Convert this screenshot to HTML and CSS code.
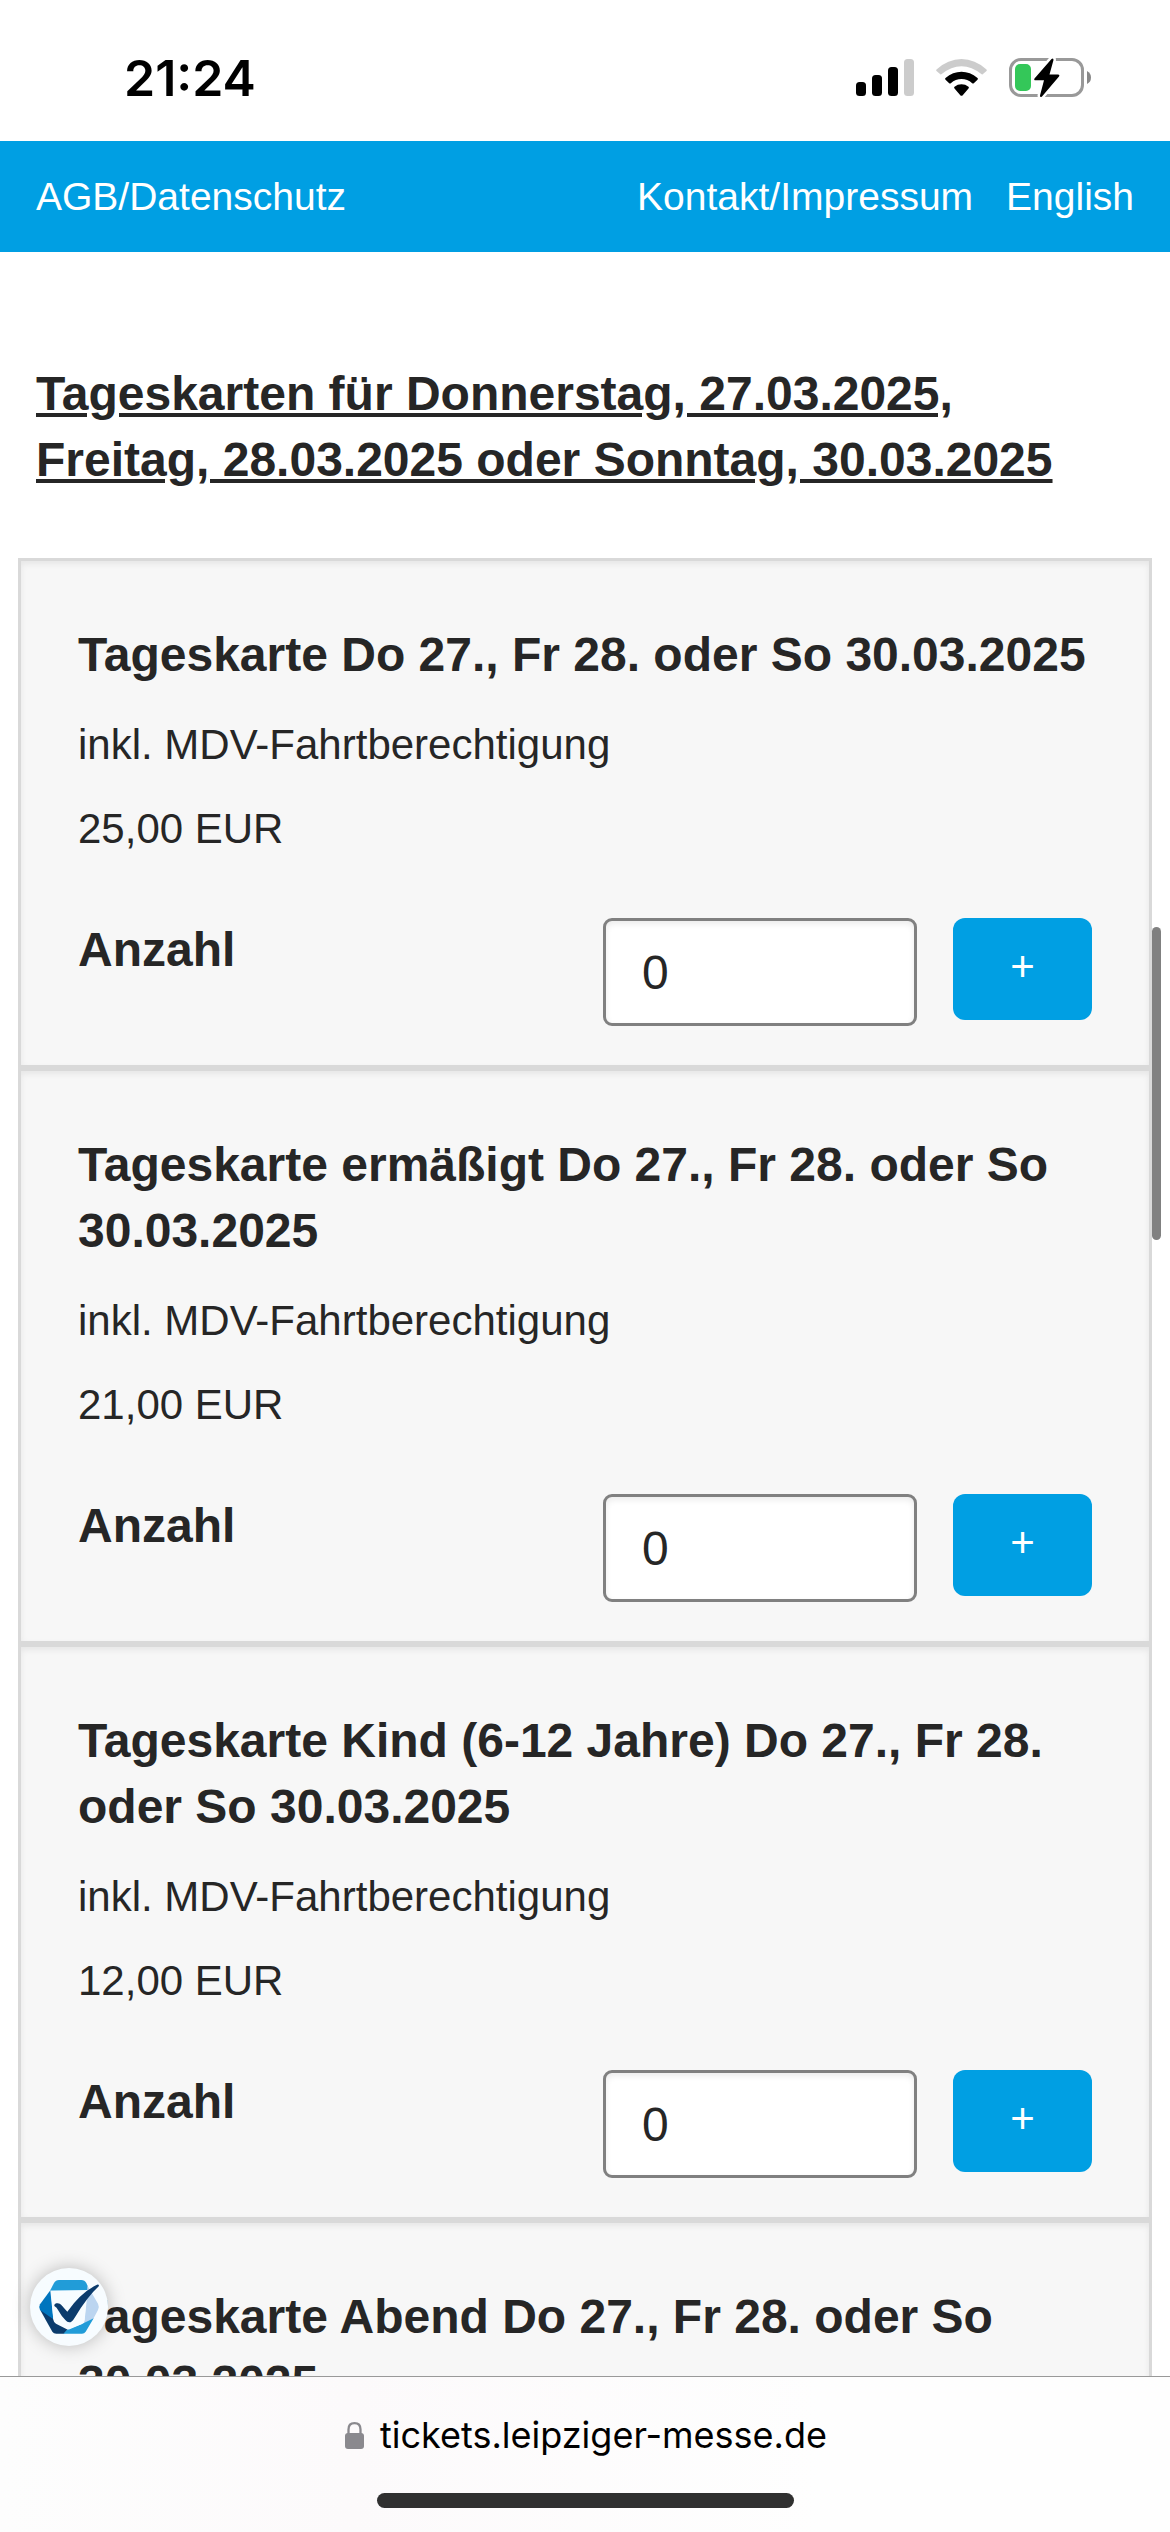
FILE: index.html
```html
<!DOCTYPE html>
<html lang="de">
<head>
    <meta charset="UTF-8">
    <meta name="viewport" content="width=device-width, initial-scale=1.0">
    <title>Tickets - Leipziger Messe</title>
    <link rel="stylesheet" href="styles.css">
</head>
<body>

<div class="statusbar">
  <span class="time">21:24</span>
  <svg class="status-icons" width="236" height="42" viewBox="0 0 236 42">
    <!-- Signal -->
    <rect x="0" y="25" width="10" height="14" rx="3.5"/>
    <rect x="16" y="18" width="10" height="21" rx="3.5"/>
    <rect x="32" y="10" width="10" height="29" rx="3.5"/>
    <rect x="48" y="2" width="10" height="37" rx="3.5" fill="#ccc"/>
    <!-- WLAN -->
    <path d="M80.500 12.500 Q79.700 13.200 80.500 14 L84.300 17.200 Q85 17.700 85.700 17.100 Q95.200 9.200 105.500 9.200 Q115.800 9.200 125.300 17.100 Q126 17.700 126.700 17.200 L130.500 14 Q131.200 13.200 130.500 12.500 Q119 2 105.500 2 Q92 2 80.500 12.500Z" fill="#ccc"/>
    <path d="M89.500 21 Q88.600 21.900 89.500 22.700 L93.200 26.200 Q94 26.900 94.800 26.200 Q99.600 22 105.500 22 Q111.400 22 116.200 26.200 Q117 26.900 117.800 26.200 L121.500 22.700 Q122.400 21.900 121.500 21 Q114.200 14.800 105.500 14.800 Q96.800 14.800 89.500 21Z"/>
    <path d="M98.500 29.700 Q97.600 30.500 98.500 31.400 L104.500 38.400 Q105.500 39.300 106.500 38.400 L112.500 31.400 Q113.400 30.500 112.500 29.700 Q109.400 27.300 105.500 27.300 Q101.600 27.300 98.500 29.700Z"/>
    <!-- Akku -->
    <rect x="154.500" y="2.500" width="72" height="36" rx="10.500" fill="none" stroke="#999" stroke-width="3"/>
    <path d="M231 14 Q235 16 235 20.500 Q235 25 231 27Z" fill="#888"/>
    <rect x="159" y="7" width="16" height="27" rx="5" fill="#34c759"/>
    <path d="M195.500 2 L178.500 21.500 Q177.500 23.300 179.500 23.300 H188 L184 38.500 Q184 41 186 39.500 L203 19.500 Q204 17.500 202 17.500 H193.500 L197.500 3 Q197.500 0.500 195.500 2Z" stroke="#fff" stroke-width="5" paint-order="stroke"/>
  </svg>
</div>

<header class="topbar">
  <a href="#">AGB/Datenschutz</a>
  <nav>
    <a href="#">Kontakt/Impressum</a>
    <a href="#">English</a>
  </nav>
</header>

<main class="content">
  <h1>Tageskarten für Donnerstag, 27.03.2025,<br>Freitag, 28.03.2025 oder Sonntag, 30.03.2025</h1>

  <div class="tickets">
    <div class="ticket">
      <h2>Tageskarte Do 27., Fr 28. oder So 30.03.2025</h2>
      <p>inkl. MDV-Fahrtberechtigung</p>
      <p>25,00 EUR</p>
      <div class="anzahl">
        <label for="anzahl1">Anzahl</label>
        <input type="text" id="anzahl1" value="0">
        <button>+</button>
      </div>
    </div>

    <div class="ticket">
      <h2>Tageskarte ermäßigt Do 27., Fr 28. oder So 30.03.2025</h2>
      <p>inkl. MDV-Fahrtberechtigung</p>
      <p>21,00 EUR</p>
      <div class="anzahl">
        <label for="anzahl2">Anzahl</label>
        <input type="text" id="anzahl2" value="0">
        <button>+</button>
      </div>
    </div>

    <div class="ticket">
      <h2>Tageskarte Kind (6-12 Jahre) Do 27., Fr 28. oder So 30.03.2025</h2>
      <p>inkl. MDV-Fahrtberechtigung</p>
      <p>12,00 EUR</p>
      <div class="anzahl">
        <label for="anzahl3">Anzahl</label>
        <input type="text" id="anzahl3" value="0">
        <button>+</button>
      </div>
    </div>

    <div class="ticket">
      <h2>Tageskarte Abend Do 27., Fr 28. oder So 30.03.2025</h2>
    </div>
  </div>
</main>

<footer class="browserbar">
  <div class="url">
    <svg width="19" height="27" viewBox="0 0 19 27">
      <path d="M3.500 13 V7.500 Q3.500 1.200 9.500 1.200 Q15.500 1.200 15.500 7.500 V13" fill="none" stroke="#8a898e" stroke-width="2.300"/>
      <rect x="0" y="11" width="19" height="16" rx="3" fill="#8a898e"/>
    </svg>
    <span>tickets.leipziger-messe.de</span>
  </div>
  <div class="home"></div>
</footer>

<div class="scrollbar"></div>

<div class="consent">
  <svg width="78" height="78" viewBox="30 54 234 234">
    <path d="M90 122 L102 99 Q107 90 117 90 H184 Q194 90 199 99 L203 108 V120Z" fill="#219cd8"/>
    <path d="M90 122 L93 123 L101 219 L60 180 Q55 172 60 163Z" fill="#0075be"/>
    <path d="M203 108 L234 161 Q239 171 234 180 L220 206 L192 222 L201 130Z" fill="#bbd5f0"/>
    <path d="M61 181 L144 238 L132 251 H109 Q101 251 97 245Z" fill="#0b3b6c"/>
    <path d="M221 205 L197 245 Q193 251 186 251 H130 L143 238 Q185 225 221 205Z" fill="#219cd8"/>
    <path d="M91 122 H203 L194 210 Q193 218 186 222 L149 238 Q144 240 139 237 L108 221 Q101 217 100 209Z" fill="#f7fcff"/>
    <path d="M103 168 Q102 162 109 160 Q119 158 124 165 L142 185 Q182 128 231 104 Q237 103 237 108 Q201 141 164 203 Q150 227 136 210 Q124 198 116 183 Q110 171 103 168Z" fill="#0b3b6c"/>
  </svg>
</div>

</body>
</html>
```
FILE: styles.css
```css
* {
    box-sizing: border-box;
}
body {
    margin: 0;
    width: 1170px;
    height: 2532px;
    display: flex;
    flex-direction: column;
    overflow: hidden;
    position: relative;
    font-family: "Liberation Sans", Arial, sans-serif;
    background: #fff;
    color: #262626;
}
.statusbar {
    flex: none;
    height: 141px;
    padding: 57px 78px 0 124px;
    display: flex;
    justify-content: space-between;
}
.time {
    font-family: Inter, sans-serif;
    font-size: 50px;
    font-weight: 600;
    line-height: 42px;
    color: #000;
}
.topbar {
    flex: none;
    height: 111px;
    padding: 0 36px;
    display: flex;
    align-items: center;
    justify-content: space-between;
    background: #009fe3;
    font-size: 39px;
}
.topbar a {
    color: #fff;
    text-decoration: none;
}
.topbar nav {
    display: flex;
    gap: 33px;
}
.content {
    flex: 1;
    min-height: 0;
    overflow: hidden;
    padding: 109px 18px 0;
}
h1 {
    margin: 0 18px 65px;
    font-size: 48px;
    line-height: 66px;
    text-decoration: underline;
    white-space: nowrap;
}
.ticket {
    border: 3px solid #d9d9d9;
    background: #f7f7f7;
    box-shadow: inset 0 3px 6px rgba(0,0,0,0.07);
    padding: 61px 57px 39px;
}
.ticket h2 {
    margin: 0 -10px 27px 0;
    font-size: 48px;
    line-height: 66px;
}
.ticket p {
    margin: 0 0 24px;
    font-size: 42px;
    line-height: 60px;
}
.anzahl {
    display: flex;
    align-items: flex-start;
    margin-top: 59px;
}
.anzahl label {
    flex: 1;
    font-size: 48px;
    font-weight: bold;
    line-height: 63px;
}
.anzahl input {
    width: 314px;
    height: 108px;
    padding: 0 36px;
    border: 3px solid #808080;
    border-radius: 9px;
    background: #fff;
    box-shadow: inset 0 3px 6px rgba(0,0,0,0.08);
    font: 48px "Liberation Sans", Arial, sans-serif;
    color: #262626;
}
.anzahl button {
    width: 139px;
    height: 102px;
    margin-left: 36px;
    padding: 0 0 5px;
    border: none;
    border-radius: 12px;
    background: #009fe3;
    color: #fff;
    font: 42px "Liberation Sans", Arial, sans-serif;
}
.browserbar {
    flex: none;
    height: 156px;
    border-top: 1px solid #999;
    background: linear-gradient(90deg, #fdfdfd, #fcfafb 30%, #fefefe 70%);
    display: flex;
    flex-direction: column;
    align-items: center;
}
.url {
    display: flex;
    align-items: center;
    gap: 16px;
    height: 116px;
    padding-left: 2px;
    font-family: Inter, sans-serif;
    font-size: 36px;
    color: #000;
}
.home {
    width: 417px;
    height: 15px;
    border-radius: 8px;
    background: #303030;
}
.scrollbar {
    position: absolute;
    top: 927px;
    right: 9px;
    width: 9px;
    height: 313px;
    border-radius: 5px;
    background: #808080;
}
.consent {
    position: absolute;
    left: 30px;
    top: 2268px;
    width: 78px;
    height: 78px;
    border-radius: 50%;
    background: #f7fcff;
    box-shadow: 0 0 18px rgba(0,0,0,0.25);
}
```
